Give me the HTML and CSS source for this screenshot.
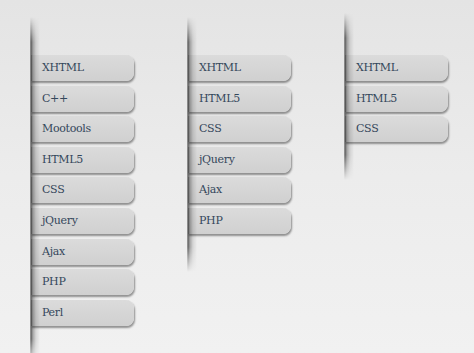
FILE: index.html
```html
<!DOCTYPE html>
<html lang="en">
<head>
    <meta charset="UTF-8">
    <meta name="viewport" content="width=device-width, initial-scale=1.0">
    <title>Vertical Menus</title>
    <link rel="stylesheet" href="styles.css">
</head>
<body>
    <div class="menus">
        <ul class="menu">
            <li><a href="#">XHTML</a></li>
            <li><a href="#">C++</a></li>
            <li><a href="#">Mootools</a></li>
            <li><a href="#">HTML5</a></li>
            <li><a href="#">CSS</a></li>
            <li><a href="#">jQuery</a></li>
            <li><a href="#">Ajax</a></li>
            <li><a href="#">PHP</a></li>
            <li><a href="#">Perl</a></li>
        </ul>
        <ul class="menu">
            <li><a href="#">XHTML</a></li>
            <li><a href="#">HTML5</a></li>
            <li><a href="#">CSS</a></li>
            <li><a href="#">jQuery</a></li>
            <li><a href="#">Ajax</a></li>
            <li><a href="#">PHP</a></li>
        </ul>
        <ul class="menu menu-short">
            <li><a href="#">XHTML</a></li>
            <li><a href="#">HTML5</a></li>
            <li><a href="#">CSS</a></li>
        </ul>
    </div>
</body>
</html>
```

FILE: styles.css
```css
html, body {
    height: 100%;
}
body {
    margin: 0;
    background: linear-gradient(to bottom, #e4e4e4 0%, #ececec 50%, #f1f1f1 100%);
    overflow: hidden;
}
.menus {
    display: flex;
    align-items: flex-start;
    gap: 54px;
    padding: 17px 0 0 31px;
}
.menu {
    position: relative;
    list-style: none;
    margin: 0;
    padding: 38px 0 38px 0;
    width: 103px;
    display: flex;
    flex-direction: column;
    gap: 4.6px;
}
.menu::before {
    content: "";
    position: absolute;
    left: -1px;
    top: 0;
    bottom: 0;
    width: 10px;
    background: linear-gradient(to right, rgba(0, 0, 0, 0.2) 0, rgba(0, 0, 0, 0.6) 1px, rgba(0, 0, 0, 0.3) 3px, rgba(0, 0, 0, 0.1) 6px, rgba(0, 0, 0, 0) 10px);
    -webkit-mask-image: linear-gradient(to bottom, transparent 0, #000 25px, #000 calc(100% - 25px), transparent 100%);
    mask-image: linear-gradient(to bottom, transparent 0, #000 25px, #000 calc(100% - 25px), transparent 100%);
}
.menu-short {
    margin-top: -4px;
    padding-top: 42px;
}
.menu a {
    display: block;
    height: 26px;
    line-height: 25px;
    padding-left: 11px;
    font-family: "DejaVu Serif", Georgia, serif;
    font-size: 11px;
    letter-spacing: -0.3px;
    color: #34475b;
    text-decoration: none;
    background: linear-gradient(to bottom, #dbdbdb 0%, #d0d0d0 100%);
    border-radius: 0 8px 8px 0;
    box-shadow: 1px 2px 2px rgba(0, 0, 0, 0.4), inset 1px 0 0 rgba(0, 0, 0, 0.12);
}
.menu a:hover {
    background: #e2e2e2;
}
```
